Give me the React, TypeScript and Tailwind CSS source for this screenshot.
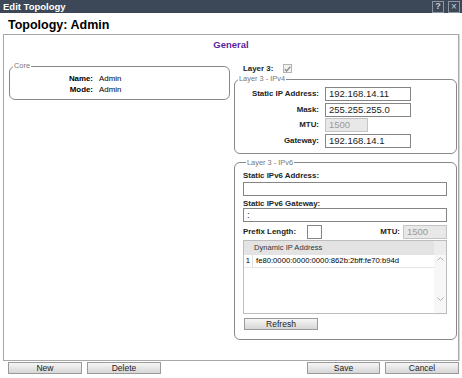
import React from 'react';

const Fieldset: React.FC<{ legend: string; className?: string; children: React.ReactNode }> = ({ legend, className = '', children }) => (
  <fieldset className={`min-w-0 border border-[#888] rounded-[6px] ${className}`}>
    <legend className="ml-[3px] px-[1px] text-[7.4px] leading-[8px] text-[#777]">{legend}</legend>
    {children}
  </fieldset>
);

const Input: React.FC<{ value?: string; className?: string; disabled?: boolean; muted?: boolean }> = ({ value = '', className = '', disabled, muted }) => (
  <div
    className={`h-[14px] border flex items-center pl-[3px] text-[9.5px] leading-none ${
      disabled ? 'bg-[#e8e8e8] border-[#c4c4c4] text-[#9a9a9a]' : 'bg-white border-[#858585] text-[#222]'
    } ${muted ? 'text-[#9a9a9a]' : ''} ${className}`}
  >
    {value}
  </div>
);

const Btn: React.FC<{ label: string; className?: string }> = ({ label, className = '' }) => (
  <div
    className={`h-[12px] border border-[#9a9a9a] bg-linear-to-b from-[#f6f6f6] to-[#d6d6d6] flex items-center justify-center text-[8.5px] leading-none text-[#222] ${className}`}
  >
    {label}
  </div>
);

const Chevron: React.FC<{ up?: boolean }> = ({ up }) => (
  <svg width="7" height="4" viewBox="0 0 7 4">
    <path d={up ? 'M0.5 3.5 L3.5 0.5 L6.5 3.5' : 'M0.5 0.5 L3.5 3.5 L6.5 0.5'} fill="none" stroke="#b0b0b0" strokeWidth="1" />
  </svg>
);

export default function App() {
  return (
    <div className="w-[462px] h-[378px] bg-white overflow-hidden font-['Liberation_Sans',Arial,sans-serif] text-[#222]">
      {/* title bar */}
      <div className="h-[13px] bg-[#3c4757] flex items-center justify-between pl-[3px] pr-[2px]">
        <span className="text-[9.5px] leading-none font-bold text-white">Edit Topology</span>
        <div className="flex gap-[4px]">
          <div className="w-[12px] h-[12px] border border-[#8d96a3] flex items-center justify-center text-[9px] leading-none font-bold text-[#c9ced6]">?</div>
          <div className="w-[12px] h-[12px] border border-[#8d96a3] flex items-center justify-center text-[10px] leading-none text-[#c9ced6]">×</div>
        </div>
      </div>

      <div className="h-[21px] pl-[8px] pt-[5px]">
        <h1 className="text-[12.5px] leading-[14px] font-bold text-black">Topology: Admin</h1>
      </div>

      {/* main panel */}
      <div className="mx-[3px] h-[327px] border border-[#a8a8a8] shadow-[1px_0_0_#d8d8d8]">
        <div className="h-[26px] pt-[5px] text-center text-[9.5px] leading-[10px] font-bold text-[#5b1f9e]">General</div>

        <div className="flex">
          {/* left column */}
          <div className="w-[226px] pl-[5px]">
            <Fieldset legend="Core" className="mt-[1px] pt-[3px] pb-[4px]">
              <div className="grid grid-cols-[83px_auto] gap-x-[6px] text-[7.9px] leading-[11px] text-black">
                <span className="text-right font-bold">Name:</span>
                <span>Admin</span>
                <span className="text-right font-bold">Mode:</span>
                <span>Admin</span>
              </div>
            </Fieldset>
          </div>

          {/* right column */}
          <div className="w-[223px] ml-[4px]">
            <div className="h-[13px] mt-[1px] flex items-center pl-[9px]">
              <span className="w-[40px] text-[7.9px] leading-none font-bold">Layer 3:</span>
              <div className="w-[9px] h-[9px] border border-[#b4b4b4] bg-[#f2f2f2] flex items-center justify-center">
                <svg width="7" height="6" viewBox="0 0 7 6">
                  <path d="M0.8 3.2 L2.6 5 L6.3 0.8" fill="none" stroke="#8c8c8c" strokeWidth="1.3" />
                </svg>
              </div>
            </div>

            <Fieldset legend="Layer 3 - IPv4" className="pt-[4px] pb-[5px]">
              <div className="flex flex-col gap-[1.5px] text-[7.9px] font-bold">
                {[
                  ['Static IP Address:', '192.168.14.11', false],
                  ['Mask:', '255.255.255.0', false],
                  ['MTU:', '1500', true],
                  ['Gateway:', '192.168.14.1', false],
                ].map(([label, value, dis]) => (
                  <div key={label as string} className="h-[14px] flex items-center">
                    <span className="w-[84px] text-right leading-none">{label}</span>
                    <Input
                      value={value as string}
                      disabled={dis as boolean}
                      className={`ml-[6px] font-normal ${dis ? 'w-[43px]' : 'w-[86px]'}`}
                    />
                  </div>
                ))}
              </div>
            </Fieldset>

            <Fieldset legend="Layer 3 - IPv6" className="mt-[5px] pt-[4px] pl-[8px] pr-[9px] pb-[9px]">
              <div className="text-[7.9px] leading-[9px] font-bold">Static IPv6 Address:</div>
              <Input className="mt-[2.5px] h-[13px]" />
              <div className="mt-[2.5px] text-[7.9px] leading-[9px] font-bold">Static IPv6 Gateway:</div>
              <Input value=":" muted className="mt-[0.5px] h-[13px]" />
              <div className="mt-[3px] h-[13px] flex items-center text-[7.9px] font-bold">
                <span className="w-[64px] leading-none">Prefix Length:</span>
                <Input className="w-[15px] h-[13px]" />
                <span className="flex-1" />
                <span className="leading-none">MTU:</span>
                <Input value="1500" disabled className="ml-[3px] w-[44px] h-[13px] font-normal" />
              </div>

              <div className="mt-[2px] h-[74px] border border-[#bdbdbd] flex">
                <div className="flex-1 flex flex-col">
                  <div className="h-[14px] bg-[#e3e3e3] flex items-center pl-[10px] text-[7.6px] leading-none text-[#333]">
                    Dynamic IP Address
                  </div>
                  <div className="h-[13px] flex items-center border-b border-[#e6e6e6] text-[7.7px] leading-none text-black">
                    <span className="w-[9px] h-full flex items-center justify-center border-r border-[#e0e0e0]">1</span>
                    <span className="pl-[3px]">fe80:0000:0000:0000:862b:2bff:fe70:b94d</span>
                  </div>
                </div>
                <div className="w-[12px] bg-[#f7f7f7] flex flex-col items-center">
                  <div className="h-[14px] w-full bg-[#ececec]" />
                  <div className="mt-[2px]">
                    <Chevron up />
                  </div>
                  <div className="mt-[36px]">
                    <Chevron />
                  </div>
                </div>
              </div>

              <Btn label="Refresh" className="mt-[4px] ml-[1px] w-[74px] h-[11px]" />
            </Fieldset>
          </div>
        </div>
      </div>

      {/* bottom buttons */}
      <div className="mt-[1px] flex pl-[8px] pr-[3px]">
        <Btn label="New" className="w-[74px]" />
        <Btn label="Delete" className="ml-[5px] w-[74px]" />
        <span className="flex-1" />
        <Btn label="Save" className="w-[73px]" />
        <Btn label="Cancel" className="ml-[5px] w-[74px]" />
      </div>
    </div>
  );
}
